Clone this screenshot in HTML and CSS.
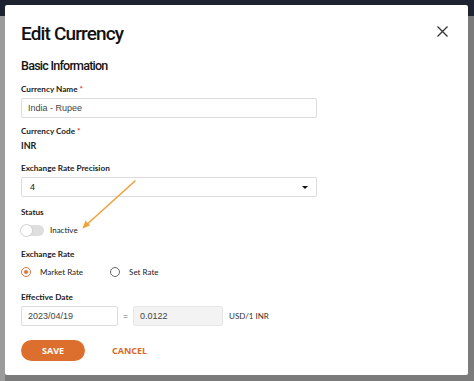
FILE: index.html
```html
<!DOCTYPE html>
<html lang="en">
<head>
<meta charset="utf-8">
<title>Edit Currency</title>
<link rel="stylesheet" href="styles.css">
</head>
<body>
<div class="page">
  <div class="topbar"></div>
  <div class="under">
    <div class="side"></div>
    <div class="main"></div>
  </div>
</div>

<div class="modal">
  <div class="modal-head">
    <h1 class="title">Edit Currency</h1>
    <button class="close" aria-label="Close">
      <svg width="11" height="11" viewBox="0 0 11 11"><path d="M0.5 0.5 L10.5 10.5 M10.5 0.5 L0.5 10.5" stroke="#333" stroke-width="1.3" fill="none"/></svg>
    </button>
  </div>

  <h2 class="section">Basic Information</h2>

  <div class="label l-name">Currency Name <span class="req">*</span></div>
  <div class="input wide">India - Rupee</div>

  <div class="label l-code">Currency Code <span class="req">*</span></div>
  <div class="value">INR</div>

  <div class="label l-prec">Exchange Rate Precision</div>
  <div class="input wide select">4<span class="caret"></span></div>

  <div class="label l-status">Status</div>
  <div class="toggle-row">
    <span class="toggle"><span class="knob"></span></span>
    <span class="opt-text">Inactive</span>
  </div>

  <div class="label l-rate">Exchange Rate</div>
  <div class="radio-row">
    <span class="radio on"></span><span class="opt-text">Market Rate</span>
    <span class="radio off"></span><span class="opt-text">Set Rate</span>
  </div>

  <div class="label l-date">Effective Date</div>
  <div class="date-row">
    <div class="input date">2023/04/19</div>
    <span class="eq">=</span>
    <div class="input rate">0.0122</div>
    <span class="unit">USD/1 INR</span>
  </div>

  <div class="actions">
    <button class="btn-save">SAVE</button>
    <button class="btn-cancel">CANCEL</button>
  </div>
</div>

<svg class="annot" width="474" height="381" viewBox="0 0 474 381">
  <path d="M135 181 L84 227" stroke="#f0a23c" stroke-width="1.6" fill="none" stroke-linecap="round"/>
  <path d="M82.5 228.5 L85.5 220.5 L90 225.5 Z" fill="#f0a23c"/>
</svg>
</body>
</html>
```

FILE: styles.css
```css
* { box-sizing: border-box; }
html, body { margin: 0; padding: 0; }
body {
  width: 474px;
  height: 381px;
  overflow: hidden;
  background: #7d7d7d;
  font-family: Lato, "Open Sans", "Liberation Sans", sans-serif;
}
.page { display: flex; flex-direction: column; height: 381px; }
.topbar { height: 16px; background: #1d2330; }
.under { flex: 1; display: flex; }
.side { width: 5px; background: #9b9b9b; }
.main { flex: 1; background: #7b7b7b; }

.modal {
  position: absolute;
  left: 5px;
  top: 5px;
  width: 463px;
  height: 370px;
  background: #fff;
  border-radius: 2px;
  padding: 17px 16px 0 16px;
  display: flex;
  flex-direction: column;
  align-items: flex-start;
  color: #1b1b1b;
}
.modal-head {
  width: 100%;
  display: flex;
  justify-content: space-between;
  align-items: flex-start;
}
.title {
  margin: 0;
  font-family: Roboto, "Liberation Sans", sans-serif;
  font-weight: 500;
  font-size: 19px;
  letter-spacing: -0.85px;
  line-height: 24px;
  color: #111;
}
.close {
  border: 0;
  background: none;
  padding: 0;
  margin: 4px 4px 0 0;
  width: 11px;
  height: 11px;
  display: flex;
}
.section {
  margin: 12px 0 0 0;
  font-family: Roboto, "Liberation Sans", sans-serif;
  font-weight: 500;
  font-size: 12.5px;
  letter-spacing: -0.75px;
  line-height: 16px;
  color: #151515;
}
.label {
  font-weight: 700;
  font-size: 8.2px;
  line-height: 12px;
  color: #222;
}
.req { color: #d93a2f; }
.l-name { margin-top: 9px; }
.l-code { margin-top: 7px; }
.l-prec { margin-top: 10px; }
.l-status { margin-top: 9px; }
.l-rate { margin-top: 12px; }
.l-date { margin-top: 13px; }

.input {
  height: 20px;
  border: 1px solid #dcdcdc;
  border-radius: 2px;
  padding: 0 6px;
  font-family: "Liberation Sans", Arial, sans-serif;
  font-size: 9px;
  line-height: 18px;
  color: #444;
  margin-top: 3px;
  background: #fff;
}
.wide { width: 296px; }
.select { position: relative; padding-left: 8px; color: #222; }
.caret {
  position: absolute;
  right: 8px;
  top: 8px;
  width: 0;
  height: 0;
  border-left: 3px solid transparent;
  border-right: 3px solid transparent;
  border-top: 3px solid #111;
}
.value {
  margin-top: 3px;
  font-weight: 700;
  font-size: 9px;
  line-height: 12px;
  color: #1a1a1a;
}

.toggle-row {
  margin-top: 6px;
  display: flex;
  align-items: center;
  height: 12px;
}
.toggle {
  position: relative;
  width: 23px;
  height: 11px;
  border-radius: 6px;
  background: #dedede;
  margin-right: 6px;
}
.knob {
  position: absolute;
  left: -1px;
  top: -1px;
  width: 13px;
  height: 13px;
  border-radius: 50%;
  background: #fff;
  border: 1px solid #cfcfcf;
}
.opt-text {
  font-size: 8px;
  line-height: 12px;
  color: #222;
}

.radio-row {
  margin-top: 6px;
  height: 12px;
  display: flex;
  align-items: center;
}
.radio {
  width: 10px;
  height: 10px;
  border-radius: 50%;
  margin-right: 9px;
  position: relative;
}
.radio.on { border: 1.3px solid #e0763a; }
.radio.on::after {
  content: "";
  position: absolute;
  left: 1.7px;
  top: 1.7px;
  width: 4px;
  height: 4px;
  border-radius: 50%;
  background: #e0763a;
}
.radio.off { border: 1px solid #666; margin-left: 27px; }

.date-row {
  display: flex;
  align-items: center;
  margin-top: 3px;
}
.date-row .input { margin-top: 0; }
.date { width: 97px; }
.eq {
  width: 15px;
  text-align: center;
  font-size: 9px;
  color: #666;
}
.rate { width: 90px; background: #f3f3f3; border-color: #e6e6e6; }
.unit {
  margin-left: 6px;
  font-size: 8px;
  color: #333;
}

.actions {
  margin-top: 14px;
  display: flex;
  align-items: center;
}
.btn-save {
  width: 64px;
  height: 21px;
  border: 0;
  border-radius: 11px;
  background: #dd6f2e;
  color: #fff;
  font-family: "Open Sans", sans-serif;
  font-weight: 700;
  font-size: 9px;
  padding: 0;
}
.btn-cancel {
  margin-left: 27px;
  border: 0;
  background: none;
  padding: 0;
  color: #d96a2b;
  font-family: "Open Sans", sans-serif;
  font-weight: 700;
  font-size: 9px;
}

.annot {
  position: absolute;
  left: 0;
  top: 0;
  pointer-events: none;
}
```
